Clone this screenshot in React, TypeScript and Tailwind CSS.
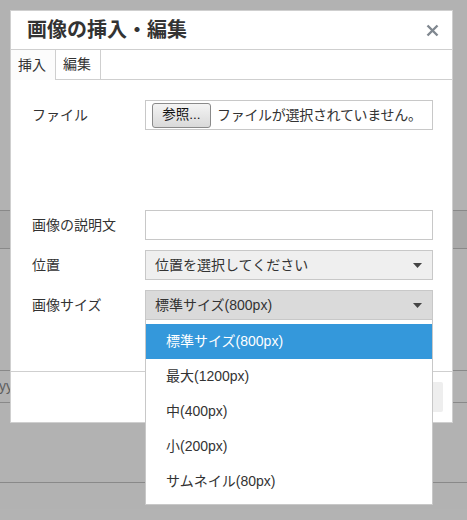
import { useState } from "react";

const sizes = [
  "標準サイズ(800px)",
  "最大(1200px)",
  "中(400px)",
  "小(200px)",
  "サムネイル(80px)",
];

const font = "font-['Liberation_Sans','Noto_Sans_CJK_JP',sans-serif]";

// 下向きの小さな三角
const Caret = () => (
  <svg width="9" height="5" viewBox="0 0 9 5" className="shrink-0">
    <path d="M0 0h9L4.5 5z" fill="#444" />
  </svg>
);

const App = () => {
  const [selected] = useState(0);

  return (
    <div className={`relative h-[520px] w-full overflow-hidden bg-white ${font}`}>
      {/* 背面のページ */}
      <div className="pt-[210px]">
        <div className="h-[39px] border-y border-[#c4c4c4] bg-[#f1f1f1]" />
        <div className="mt-[121px] flex h-[33px] items-center border-y border-[#c4c4c4] overflow-hidden">
          <span className="-ml-[15px] whitespace-nowrap text-[14px] text-[#888]">yyyy/mm/dd</span>
        </div>
        <div className="mt-[79px] border-t border-[#c4c4c4]" />
      </div>

      {/* オーバーレイ */}
      <div className="absolute inset-0 bg-black/30" />

      {/* ダイアログ */}
      <div className="absolute left-[10px] top-[10px] flex h-[413px] w-[443px] flex-col border border-[#cfcfcf] bg-white text-[#333]">
        <div className="flex h-[39px] shrink-0 items-center justify-between border-b border-[#cfcfcf] pl-[16px] pr-[13px]">
          <h2 className="text-[20px] font-bold leading-none text-[#333]">画像の挿入・編集</h2>
          <button className="text-[#808890]" aria-label="閉じる">
            <svg width="13" height="13" viewBox="0 0 13 13">
              <path d="M1.5 1.5l10 10M11.5 1.5l-10 10" stroke="currentColor" strokeWidth="2.4" />
            </svg>
          </button>
        </div>

        <div className="flex h-[30px] shrink-0 text-[14px]">
          <div className="flex w-[45px] items-center border-r border-[#cfcfcf] bg-[#fcfcfc] pl-[7px]">挿入</div>
          <div className="flex w-[45px] items-center border-b border-r border-[#cfcfcf] pl-[7px]">編集</div>
          <div className="flex-1 border-b border-[#cfcfcf]" />
        </div>

        <div className="h-[291px] shrink-0 pl-[21px] pt-[20px] text-[14px]">
          <div className="flex h-[30px] items-center">
            <label className="w-[113px]">ファイル</label>
            <div className="flex h-[30px] w-[288px] items-center gap-[6px] border border-[#c8c8c8] pl-[6px]">
              <button className="flex h-[25px] w-[59px] items-center justify-center rounded-[3px] border border-[#8a8a8a] bg-gradient-to-b from-[#f4f4f4] to-[#d9d9d9] text-[13.5px] text-[#111]">
                参照...
              </button>
              <span className="whitespace-nowrap text-[14px] tracking-[-0.3px] text-[#333]">ファイルが選択されていません。</span>
            </div>
          </div>

          <div className="mt-[80px] flex h-[30px] items-center">
            <label className="w-[113px]">画像の説明文</label>
            <input className="h-[30px] w-[288px] border border-[#c8c8c8] bg-white px-[9px] outline-none" />
          </div>

          <div className="mt-[10px] flex h-[30px] items-center">
            <label className="w-[113px]">位置</label>
            <div className="flex h-[30px] w-[288px] items-center justify-between border border-[#c8c8c8] bg-[#efefef] pl-[9px] pr-[10px]">
              <span>位置を選択してください</span>
              <Caret />
            </div>
          </div>

          <div className="mt-[10px] flex h-[30px] items-center">
            <label className="w-[113px]">画像サイズ</label>
            <div className="relative w-[288px]">
              <div className="flex h-[30px] items-center justify-between border border-[#c8c8c8] bg-[#dadada] pl-[9px] pr-[10px]">
                <span>{sizes[selected]}</span>
                <Caret />
              </div>
              <ul className="absolute left-0 top-full z-10 w-full border border-t-0 border-[#c8c8c8] bg-white pb-[5px] pt-[4px]">
                {sizes.map((s, i) => (
                  <li
                    key={s}
                    className={
                      i === selected
                        ? "flex h-[35px] items-center bg-[#3498db] pl-[20px] text-white"
                        : "flex h-[35px] items-center pl-[20px] text-[#333]"
                    }
                  >
                    {s}
                  </li>
                ))}
              </ul>
            </div>
          </div>
        </div>

        <div className="flex flex-1 justify-end border-t border-[#cfcfcf] pr-[9px] pt-[10px]">
          <button className="h-[30px] rounded-[2px] bg-[#eeeeee] px-[10px] text-[14px] text-[#2a6fc9]">挿入する</button>
        </div>
      </div>
    </div>
  );
};

export default App;
